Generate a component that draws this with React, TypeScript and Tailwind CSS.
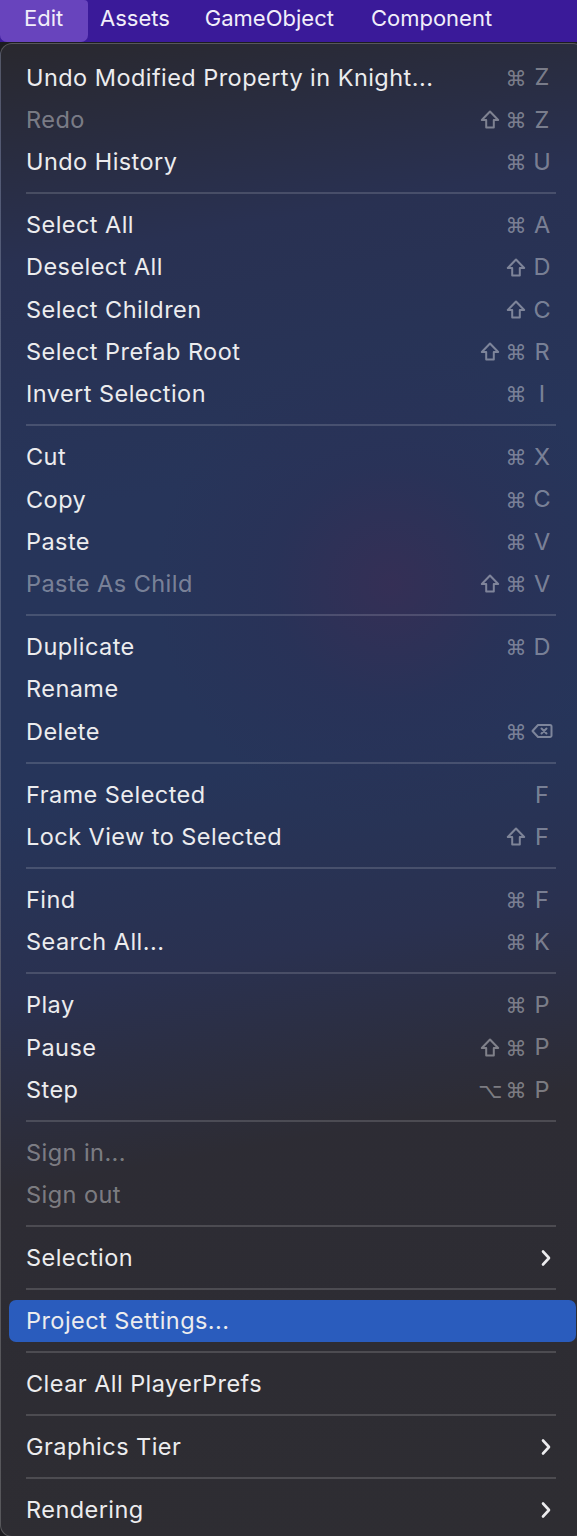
import { ReactNode } from "react";

type Item = {
  label: string;
  keys?: string[];
  disabled?: boolean;
  submenu?: boolean;
  active?: boolean;
};

const groups: Item[][] = [
  [
    { label: "Undo Modified Property in Knight...", keys: ["⌘", "Z"] },
    { label: "Redo", keys: ["⇧", "⌘", "Z"], disabled: true },
    { label: "Undo History", keys: ["⌘", "U"] },
  ],
  [
    { label: "Select All", keys: ["⌘", "A"] },
    { label: "Deselect All", keys: ["⇧", "D"] },
    { label: "Select Children", keys: ["⇧", "C"] },
    { label: "Select Prefab Root", keys: ["⇧", "⌘", "R"] },
    { label: "Invert Selection", keys: ["⌘", "I"] },
  ],
  [
    { label: "Cut", keys: ["⌘", "X"] },
    { label: "Copy", keys: ["⌘", "C"] },
    { label: "Paste", keys: ["⌘", "V"] },
    { label: "Paste As Child", keys: ["⇧", "⌘", "V"], disabled: true },
  ],
  [
    { label: "Duplicate", keys: ["⌘", "D"] },
    { label: "Rename" },
    { label: "Delete", keys: ["⌘", "⌫"] },
  ],
  [
    { label: "Frame Selected", keys: ["F"] },
    { label: "Lock View to Selected", keys: ["⇧", "F"] },
  ],
  [
    { label: "Find", keys: ["⌘", "F"] },
    { label: "Search All...", keys: ["⌘", "K"] },
  ],
  [
    { label: "Play", keys: ["⌘", "P"] },
    { label: "Pause", keys: ["⇧", "⌘", "P"] },
    { label: "Step", keys: ["⌥", "⌘", "P"] },
  ],
  [
    { label: "Sign in...", disabled: true },
    { label: "Sign out", disabled: true },
  ],
  [{ label: "Selection", submenu: true }],
  [{ label: "Project Settings...", active: true }],
  [{ label: "Clear All PlayerPrefs" }],
  [{ label: "Graphics Tier", submenu: true }],
  [{ label: "Rendering", submenu: true }],
];

function Key({ k }: { k: string }) {
  if (k === "⌫") {
    return (
      <span className="w-[26px] flex justify-center">
        <svg width="22" height="16" viewBox="0 0 22 16" fill="none" stroke="currentColor" strokeWidth="2" strokeLinejoin="round" strokeLinecap="round">
          <path d="M7 2h12a1.5 1.5 0 0 1 1.5 1.5v9A1.5 1.5 0 0 1 19 14H7L1.5 8z" />
          <path d="M10.5 5.5l5 5M15.5 5.5l-5 5" />
        </svg>
      </span>
    );
  }
  if (k === "⇧") {
    return (
      <span className="w-[26px] flex justify-center">
        <svg width="20" height="19" viewBox="0 0 20 19" fill="none" stroke="currentColor" strokeWidth="2" strokeLinejoin="round">
          <path d="M10 1.5L1.8 10h4.4v7.5h7.6V10h4.4z" />
        </svg>
      </span>
    );
  }
  const isGlyph = k === "⌘" || k === "⌥";
  return (
    <span
      className={
        isGlyph
          ? "w-[26px] text-center text-[21px] leading-none relative top-[2px] font-['DejaVu_Sans',sans-serif]"
          : "w-[26px] text-center text-[23.5px] leading-none"
      }
    >
      {k}
    </span>
  );
}

function Chevron() {
  return (
    <svg width="26" height="22" viewBox="0 0 26 22" fill="none" stroke="currentColor" strokeWidth="2.6" strokeLinecap="round" strokeLinejoin="round">
      <path d="M14 4.5l6 6.5-6 6.5" />
    </svg>
  );
}

function Row({ item }: { item: Item }) {
  const base = "h-[42.3px] flex items-center pl-[17px] pr-[21px] mx-2";
  const bg = item.active ? " bg-[#2a5cbd] rounded-[7px]" : "";
  const color = item.disabled ? " text-white/40" : " text-[#ececee]";
  let right: ReactNode = null;
  if (item.submenu) right = <Chevron />;
  else if (item.keys)
    right = (
      <span className="flex items-center text-white/40">
        {item.keys.map((k, i) => (
          <Key key={i} k={k} />
        ))}
      </span>
    );
  return (
    <div className={base + bg + color}>
      <span className="flex-1 text-[23.5px] tracking-[0.45px]">{item.label}</span>
      {right}
    </div>
  );
}

function Separator() {
  return (
    <div className="h-[20.7px] flex items-center pl-[25px] pr-[28px]">
      <div className="h-[2px] w-full bg-white/15" />
    </div>
  );
}

export default function App() {
  return (
    <div className="w-[577px] h-[1536px] overflow-hidden bg-[#1c1c20] font-['Inter',sans-serif]">
      <div className="h-[42px] bg-[#3a1a99] flex items-center pb-[5px] text-[22px] text-[#f1eefa]">
        <div className="h-[42px] -mb-[5px] pb-[5px] w-[88px] bg-[#6844bd] rounded-b-[7px] rounded-tr-[4px] flex items-center pl-[24px]">Edit</div>
        <div className="pl-[12px]">Assets</div>
        <div className="pl-[35px]">GameObject</div>
        <div className="pl-[37px]">Component</div>
      </div>
      <div className="relative w-[585px] h-[1494px] mt-[1px] rounded-[12px] border border-white/20 overflow-hidden bg-[linear-gradient(170deg,#29282e_0%,#293152_14%,#27355a_30%,#26355a_48%,#2a3150_60%,#2d2c34_72%,#2e2d32_100%)]">
        <div className="absolute left-[150px] top-[300px] w-[480px] h-[480px] rounded-full bg-[radial-gradient(circle,rgba(70,40,80,0.45)_0%,rgba(50,40,80,0.2)_35%,rgba(40,50,90,0)_70%)]" />
        <div className="relative pt-[12px]">
          {groups.map((g, gi) => (
            <div key={gi}>
              {gi > 0 && <Separator />}
              {g.map((item) => (
                <Row key={item.label} item={item} />
              ))}
            </div>
          ))}
        </div>
      </div>
    </div>
  );
}
